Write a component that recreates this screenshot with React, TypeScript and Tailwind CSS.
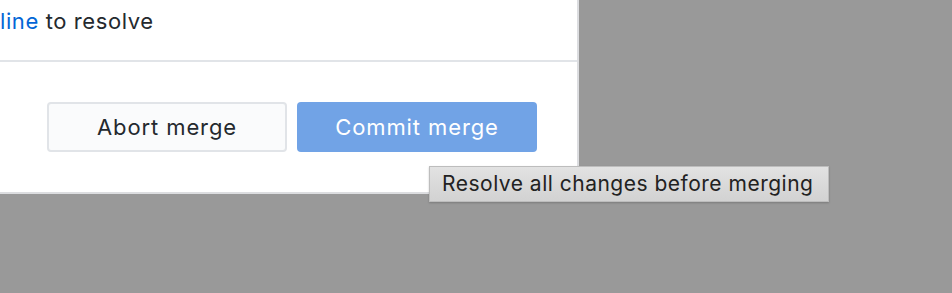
import React from "react";

export default function App() {
  return (
    <div
      className="relative w-[952px] h-[293px] bg-[#999999] overflow-hidden"
      style={{ fontFamily: 'Inter, "Noto Sans", sans-serif' }}
    >
      <div className="w-[579px] bg-white border-r-2 border-b-2 border-[#dcdde0] flex flex-col">
        <div className="h-[60px] flex items-start pt-[5px] text-[22px] leading-[32px] tracking-[0.6px] text-[#24292e] whitespace-nowrap">
          <span className="text-[#0366d6]">line</span>
          <span>&nbsp;to resolve</span>
        </div>
        <div className="h-[2px] bg-[#e1e4e8]" />
        <div className="flex justify-end gap-[10px] pt-[40px] pb-[40px] pr-[40px]">
          <button className="w-[240px] h-[50px] rounded-[4px] border-2 border-[#e1e4e8] bg-[#fafbfc] text-[22px] tracking-[0.9px] text-[#24292e]">
            Abort merge
          </button>
          <button className="w-[240px] h-[50px] rounded-[4px] bg-[#71a3e6] text-[22px] tracking-[0.9px] text-white">
            Commit merge
          </button>
        </div>
      </div>
      <div className="absolute left-[429px] top-[166px] w-[400px] h-[36px] flex items-center pl-[12px] text-[21px] tracking-[0.5px] text-[#222] bg-gradient-to-b from-[#e2e2e2] to-[#d2d2d2] border border-[#bdbdbd] shadow-[0_1px_2px_rgba(0,0,0,0.2)] whitespace-nowrap">
        Resolve all changes before merging
      </div>
    </div>
  );
}
